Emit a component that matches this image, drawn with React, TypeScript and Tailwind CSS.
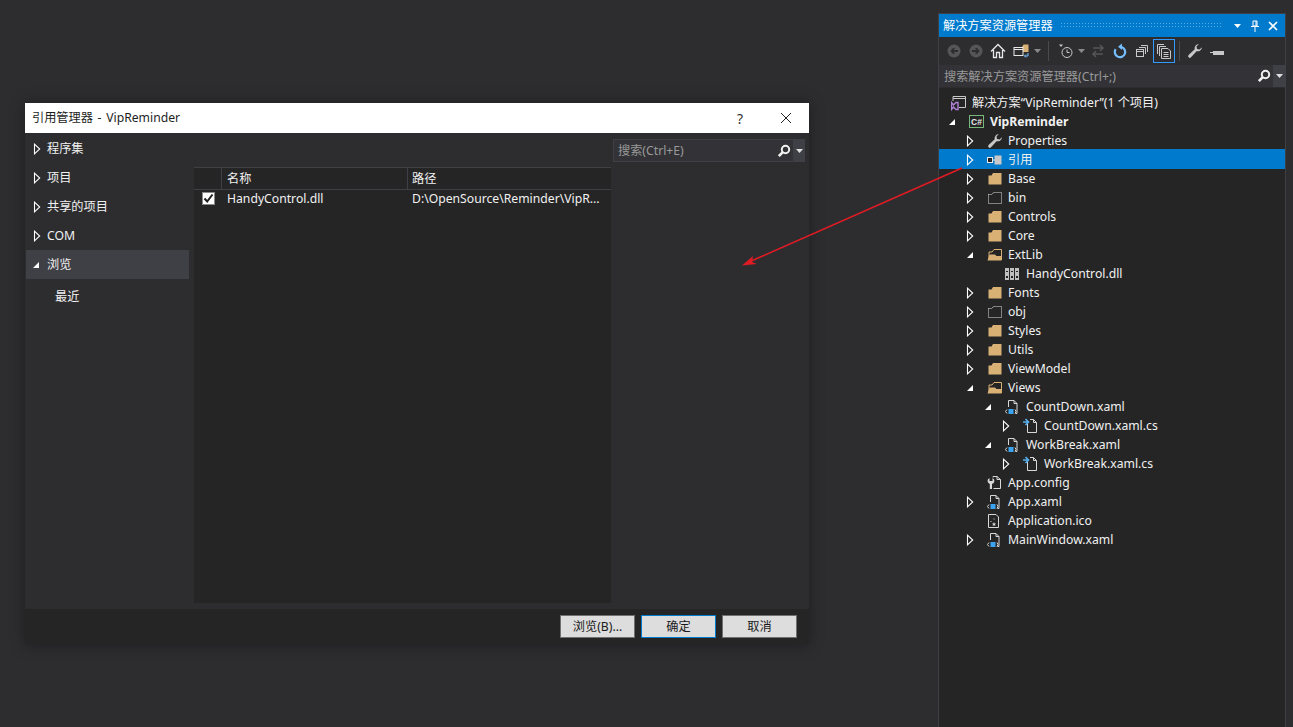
import React from "react";

const FONT = "font-['Noto_Sans','Noto_Sans_CJK_SC',sans-serif]";

function Closed() {
  return (
    <svg width="16" height="12" viewBox="0 0 16 12" className="shrink-0">
      <path d="M5.5 1.2 L10.7 6 L5.5 10.8 Z" fill="none" stroke="#ffffff" strokeWidth="1.1" />
    </svg>
  );
}
function Open() {
  return (
    <svg width="16" height="12" viewBox="0 0 16 12" className="shrink-0">
      <path d="M11 3 V9 H5 Z" fill="#ffffff" />
    </svg>
  );
}
function Folder() {
  return (
    <svg width="16" height="14" viewBox="0 0 16 14">
      <path d="M1.5 3.5 H4.5 L6 1 H14.5 V12.5 H1.5 Z" fill="#d9b174" />
    </svg>
  );
}
function FolderOpen() {
  return (
    <svg width="16" height="14" viewBox="0 0 16 14">
      <path d="M2 12 V4 H5 L7 1.5 H14.5 V12" fill="none" stroke="#d9b174" strokeWidth="1" />
      <path d="M0.5 12.5 L2.5 6.5 H8 L9.5 8 H14.5 V12.5 Z" fill="#d9b174" />
    </svg>
  );
}
function FolderDotted() {
  return (
    <svg width="16" height="14" viewBox="0 0 16 14">
      <path d="M1.5 3.5 H5 L6.5 1.5 H14.5 V12.5 H1.5 Z" fill="none" stroke="#e0e0e0" strokeDasharray="1 1" />
    </svg>
  );
}
function Wrench() {
  return (
    <svg width="16" height="16" viewBox="0 0 16 16">
      <path d="M15 4.2 A4.3 4.3 0 0 1 9.6 8.2 L4 14.3 A1.6 1.6 0 0 1 1.6 12 L7.7 6.3 A4.3 4.3 0 0 1 11.8 1 L9.5 3.4 L10 5.9 L12.5 6.4 Z" fill="#c8c8c8" />
    </svg>
  );
}
function RefIcon() {
  return (
    <svg width="16" height="14" viewBox="0 0 16 14">
      <rect x="0.5" y="4.5" width="5" height="5" fill="#252526" stroke="#e8e8e8" />
      <rect x="5" y="6.5" width="3" height="1" fill="#e8e8e8" />
      <rect x="7.5" y="2.5" width="7" height="9" fill="#c8c8c8" />
    </svg>
  );
}
function Dll() {
  return (
    <svg width="16" height="14" viewBox="0 0 16 14" fill="#c0c0c0">
      <rect x="0" y="1" width="4" height="12" />
      <rect x="5" y="1" width="4" height="12" />
      <rect x="10" y="1" width="4" height="12" />
      <path d="M1 4h2v1H1zM1 9h2v2H1zM6 4h2v1H6zM6 9h2v2H6zM11 4h2v1h-2zM11 9h2v2h-2z" fill="#252526" />
    </svg>
  );
}
function Xaml() {
  return (
    <svg width="16" height="16" viewBox="0 0 16 16">
      <path d="M3.5 8 V1.5 H9 L12 4.5 V14.5 H10.5" fill="none" stroke="#d8d8d8" />
      <path d="M9 1.5 V4.5 H12" fill="none" stroke="#d8d8d8" />
      <rect x="3.5" y="10" width="5" height="5" fill="#3ba4f0" />
      <path d="M2 10.5 L0.5 12.5 L2 14.5 M10 10.5 L11 12.5 L10 14.5" fill="none" stroke="#d8d8d8" />
    </svg>
  );
}
function Cs() {
  return (
    <svg width="16" height="16" viewBox="0 0 16 16">
      <path d="M4.5 6 V14.5 H13.5 V4.5 L10.5 1.5 H7 M10.5 1.5 V4.5 H13.5" fill="none" stroke="#d8d8d8" />
      <path d="M0 4 H5 M2.5 1 L5.5 4 L2.5 7" fill="none" stroke="#58b0f0" strokeWidth="1.6" />
    </svg>
  );
}
function Config() {
  return (
    <svg width="16" height="16" viewBox="0 0 16 16">
      <path d="M6 2.5 V1.5 H10 L13.5 4.5 V13.5 H6.5 M10 1.5 V4.5 H13.5" fill="none" stroke="#d8d8d8" />
      <path d="M5.5 3 V6 H2.5 V3 A3.2 3.2 0 0 0 2.8 9 V14 H5 V9 A3.2 3.2 0 0 0 5.5 3 Z" fill="#d8d8d8" />
    </svg>
  );
}
function Ico() {
  return (
    <svg width="16" height="16" viewBox="0 0 16 16">
      <path d="M1.5 1.5 H9 L11.5 4 V14.5 H1.5 Z" fill="none" stroke="#d8d8d8" />
      <path d="M6.5 5.5 h1v1h-1zM3.5 8h1v1h-1zM7 9 L7.6 10.5 L9 10.5 L8 11.5 L8.4 13 L7 12.2 L5.6 13 L6 11.5 L5 10.5 L6.4 10.5 Z" fill="#d8d8d8" />
    </svg>
  );
}
function Solution() {
  return (
    <svg width="16" height="16" viewBox="0 0 16 16">
      <path d="M2 6 V1.5 H14.5 V12.5 H8" fill="none" stroke="#c8c8c8" />
      <path d="M2 3.5 H14.5" stroke="#c8c8c8" />
      <path d="M0.5 7.5 L2.5 10 L5 7.5 H7 V14.5 H5 L2.5 12 L0.5 14.5 Z" fill="none" stroke="#b180d7" strokeWidth="1.4" />
    </svg>
  );
}
function CsProj() {
  return (
    <svg width="16" height="14" viewBox="0 0 16 14">
      <rect x="0.5" y="0.5" width="14" height="12" fill="#252526" stroke="#76b77a" />
      <text x="7.5" y="10" textAnchor="middle" fontSize="8.5" fontWeight="700" fill="#e8e8e8" fontFamily="Liberation Sans">C#</text>
    </svg>
  );
}
function Magnifier() {
  return (
    <svg width="14" height="14" viewBox="0 0 14 14">
      <circle cx="8.5" cy="5.5" r="3.7" fill="none" stroke="#f1f1f1" strokeWidth="2" />
      <path d="M5.8 8.2 L1.8 12.2" stroke="#f1f1f1" strokeWidth="2.6" />
    </svg>
  );
}
function Caret({ color = "#e0e0e0" }: { color?: string }) {
  return (
    <svg width="7" height="4" viewBox="0 0 7 4">
      <path d="M0 0 H7 L3.5 4 Z" fill={color} />
    </svg>
  );
}

type Node = { level: number; arrow?: "c" | "o"; icon: React.ReactNode; label: string; bold?: boolean; sel?: boolean };
const pad: Record<number, string> = {
  0: "pl-[3px]",
  1: "pl-[5px]",
  2: "pl-[23px]",
  3: "pl-[41px]",
  4: "pl-[59px]",
};
const tree: Node[] = [
  { level: 0, icon: <Solution />, label: "解决方案“VipReminder”(1 个项目)" },
  { level: 1, arrow: "o", icon: <CsProj />, label: "VipReminder", bold: true },
  { level: 2, arrow: "c", icon: <Wrench />, label: "Properties" },
  { level: 2, arrow: "c", icon: <RefIcon />, label: "引用", sel: true },
  { level: 2, arrow: "c", icon: <Folder />, label: "Base" },
  { level: 2, arrow: "c", icon: <FolderDotted />, label: "bin" },
  { level: 2, arrow: "c", icon: <Folder />, label: "Controls" },
  { level: 2, arrow: "c", icon: <Folder />, label: "Core" },
  { level: 2, arrow: "o", icon: <FolderOpen />, label: "ExtLib" },
  { level: 3, icon: <Dll />, label: "HandyControl.dll" },
  { level: 2, arrow: "c", icon: <Folder />, label: "Fonts" },
  { level: 2, arrow: "c", icon: <FolderDotted />, label: "obj" },
  { level: 2, arrow: "c", icon: <Folder />, label: "Styles" },
  { level: 2, arrow: "c", icon: <Folder />, label: "Utils" },
  { level: 2, arrow: "c", icon: <Folder />, label: "ViewModel" },
  { level: 2, arrow: "o", icon: <FolderOpen />, label: "Views" },
  { level: 3, arrow: "o", icon: <Xaml />, label: "CountDown.xaml" },
  { level: 4, arrow: "c", icon: <Cs />, label: "CountDown.xaml.cs" },
  { level: 3, arrow: "o", icon: <Xaml />, label: "WorkBreak.xaml" },
  { level: 4, arrow: "c", icon: <Cs />, label: "WorkBreak.xaml.cs" },
  { level: 2, icon: <Config />, label: "App.config" },
  { level: 2, arrow: "c", icon: <Xaml />, label: "App.xaml" },
  { level: 2, icon: <Ico />, label: "Application.ico" },
  { level: 2, arrow: "c", icon: <Xaml />, label: "MainWindow.xaml" },
];

function TreeRow({ n }: { n: Node }) {
  return (
    <div className={`flex items-center text-[12.2px] text-[#f1f1f1] ${pad[n.level]} ${n.sel ? "-mt-px h-[20px] bg-[#007acc] pt-px" : "h-[19px]"} ${n.bold ? "font-bold" : ""}`}>
      {n.level > 0 && <span className="flex w-4 justify-center">{n.arrow === "c" ? <Closed /> : n.arrow === "o" ? <Open /> : null}</span>}
      <span className="ml-[9px] flex w-4 shrink-0 justify-center">{n.icon}</span>
      <span className="ml-[5px] whitespace-nowrap leading-[19px]">{n.label}</span>
    </div>
  );
}

function Toolbar() {
  return (
    <div className="flex h-[28px] items-center pl-[4px] text-[#c8c8c8]">
      <span className="flex w-[22px] justify-center">
        <svg width="16" height="16" viewBox="0 0 16 16"><circle cx="8" cy="8" r="6.5" fill="#555558" /><path d="M12 7v2H7.5l1.5 2H7L4.5 8 7 5h2L7.5 7z" fill="#2d2d30" /></svg>
      </span>
      <span className="flex w-[22px] justify-center">
        <svg width="16" height="16" viewBox="0 0 16 16"><circle cx="8" cy="8" r="6.5" fill="#555558" /><path d="M4 7v2h4.5L7 11h2l2.5-3L9 5H7l1.5 2z" fill="#2d2d30" /></svg>
      </span>
      <span className="flex w-[22px] justify-center">
        <svg width="16" height="16" viewBox="0 0 16 16"><path d="M1 8.5 L8 1.5 L15 8.5 M3.5 7 V14.5 H6.5 V9.5 H9.5 V14.5 H12.5 V7" fill="none" stroke="#e8e8e8" strokeWidth="1.3" /></svg>
      </span>
      <span className="flex w-[24px] justify-center">
        <svg width="16" height="16" viewBox="0 0 16 16">
          <path d="M7 4 H9 L10.5 1.5 H15.5 V9 H7 Z" fill="#d9b174" />
          <rect x="1" y="4.5" width="9" height="8" fill="#2d2d30" stroke="#e8e8e8" />
          <path d="M1 6.5 H10" stroke="#e8e8e8" />
          <path d="M15 10 V13 H11.5 M13 11.5 L11.5 13 L13 14.5" fill="none" stroke="#75beff" />
        </svg>
      </span>
      <span className="flex w-[9px] justify-center"><Caret color="#8a8a8a" /></span>
      <span className="ml-[6px] h-[20px] w-px bg-[#4a4a4e]" />
      <span className="ml-[6px] flex w-[22px] justify-center">
        <svg width="16" height="16" viewBox="0 0 16 16">
          <path d="M1 1.5 H5 L3 4 Z" fill="#c8c8c8" />
          <circle cx="9" cy="9.5" r="5" fill="none" stroke="#c8c8c8" />
          <path d="M9 6.5 V9.5 H11.5" fill="none" stroke="#c8c8c8" />
        </svg>
      </span>
      <span className="flex w-[9px] justify-center"><Caret color="#8a8a8a" /></span>
      <span className="ml-[1px] flex w-[22px] justify-center">
        <svg width="16" height="16" viewBox="0 0 16 16" fill="none" stroke="#555558" strokeWidth="1.6">
          <path d="M3 5 H13 M10 2 L13 5 L10 8 M13 11 H3 M6 8 L3 11 L6 14" />
        </svg>
      </span>
      <span className="flex w-[22px] justify-center">
        <svg width="16" height="16" viewBox="0 0 16 16" fill="none">
          <path d="M9.5 4 A5.2 5.2 0 1 1 3.6 6.2" stroke="#75beff" strokeWidth="2.2" />
          <path d="M10 0.5 V7 L6 3.7 Z" fill="#75beff" />
        </svg>
      </span>
      <span className="flex w-[22px] justify-center">
        <svg width="16" height="16" viewBox="0 0 16 16" fill="none" stroke="#c8c8c8">
          <rect x="2.5" y="6.5" width="7" height="7" />
          <path d="M2.5 8.5 H9.5 M5 4.5 H11.5 V11 M7 2.5 H13.5 V9" />
        </svg>
      </span>
      <span className="flex h-[24px] w-[22px] items-center justify-center border border-[#3399ff]">
        <svg width="16" height="18" viewBox="0 0 16 18" fill="none" stroke="#c8c8c8">
          <path d="M1.5 12 V2.5 H8 M3.5 14 V4.5 H10" />
          <path d="M5.5 16.5 V6.5 H12 L14.5 9 V16.5 Z M7.5 10.5 H12.5 M7.5 12.5 H12.5 M7.5 14.5 H12.5" />
        </svg>
      </span>
      <span className="ml-[4px] h-[20px] w-px bg-[#4a4a4e]" />
      <span className="ml-[4px] flex w-[22px] justify-center"><Wrench /></span>
      <span className="flex w-[22px] justify-center">
        <svg width="16" height="16" viewBox="0 0 16 16"><path d="M1 9 H4 V8 H15 V12 H4 V10 H1 Z" fill="#c8c8c8" /></svg>
      </span>
    </div>
  );
}

function Panel() {
  return (
    <aside className="ml-[129px] mt-[13px] flex h-[714px] w-[348px] shrink-0 flex-col border-x border-t border-[#3f3f46] bg-[#252526]">
      <div className="flex h-[23px] shrink-0 items-center bg-[#007acc] pl-[4px] pr-[5px] text-[12.2px] text-white">
        <span className="whitespace-nowrap pt-[2px]">解决方案资源管理器</span>
        <span className="ml-[7px] h-[7px] flex-1 bg-[radial-gradient(#58aee0_0.8px,transparent_0.9px)] bg-[length:3px_3px]" />
        <span className="ml-[8px] flex w-[12px] justify-center"><Caret color="#fff" /></span>
        <span className="ml-[6px] flex w-[12px] justify-center">
          <svg width="10" height="12" viewBox="0 0 10 12" fill="none" stroke="#fff"><path d="M3 1h4v5H3zM1 6.5h8M5 7v5M6 1v5" /></svg>
        </span>
        <span className="ml-[5px] flex w-[14px] justify-center">
          <svg width="10" height="10" viewBox="0 0 10 10" stroke="#fff" strokeWidth="1.6"><path d="M1 1 L9 9 M9 1 L1 9" /></svg>
        </span>
      </div>
      <div className="bg-[#2d2d30]"><Toolbar /></div>
      <div className="flex h-[23px] shrink-0 items-center border-b border-[#2d2d30] bg-[#333337] pl-[5px] text-[12.2px] text-[#999999]">
        <span className="flex-1 whitespace-nowrap pt-[2px]">搜索解决方案资源管理器(Ctrl+;)</span>
        <span className="mr-[2px] flex w-[14px] justify-center"><Magnifier /></span>
        <span className="flex h-full w-[12px] items-center justify-center bg-[#3f3f46]"><Caret /></span>
      </div>
      <div className="pt-[5px]">
        {tree.map((n) => <TreeRow key={n.label} n={n} />)}
      </div>
    </aside>
  );
}

function NavItem({ label, open }: { label: string; open?: boolean }) {
  return (
    <div className={`flex h-[29px] items-center pl-[1px] text-[12.2px] text-[#f1f1f1] ${open ? "w-[163px] bg-[#3f3f46]" : ""}`}>
      <span className={`flex w-4 justify-center ${open ? "ml-[1px]" : "ml-[2px]"}`}>{open ? <Open /> : <Closed />}</span>
      <span className={`whitespace-nowrap pt-[2px] ${open ? "ml-[3px]" : "ml-[2px]"}`}>{label}</span>
    </div>
  );
}

function Btn({ label, active }: { label: string; active?: boolean }) {
  return (
    <button className={`h-[23px] w-[75px] border bg-[#dddddd] text-[12.2px] leading-[21px] text-[#1a1a1a] ${active ? "border-[#007acc]" : "border-[#707070]"}`}>
      {label}
    </button>
  );
}

function Dialog() {
  return (
    <section className="flex h-[542px] w-[784px] shrink-0 flex-col bg-[#2d2d30] shadow-[0_0_14px_rgba(0,0,0,0.35)]">
      <header className="flex h-[30px] shrink-0 items-center bg-white pl-[7px] text-[12.2px] text-[#1e1e1e]">
        <span className="flex-1 whitespace-nowrap [word-spacing:1.5px]">引用管理器 - VipReminder</span>
        <span className="w-[8px] text-[14px] text-[#333333]">?</span>
        <span className="ml-[35px] mr-[17px] flex w-[12px] justify-center">
          <svg width="12" height="12" viewBox="0 0 12 12" stroke="#222" strokeWidth="1"><path d="M1 1 L11 11 M11 1 L1 11" /></svg>
        </span>
      </header>
      <div className="flex min-h-0 flex-1">
        <nav className="w-[169px] shrink-0 pl-[1px] pt-[1px]">
          <NavItem label="程序集" />
          <NavItem label="项目" />
          <NavItem label="共享的项目" />
          <NavItem label="COM" />
          <NavItem label="浏览" open />
          <div className="h-[36px] pl-[29px] text-[12.2px] leading-[36px] text-[#f1f1f1]">最近</div>
        </nav>
        <div className="flex w-[417px] shrink-0 flex-col pt-[34px] pb-[6px]">
          <div className="flex-1 bg-[#252526] text-[12.2px] text-[#f1f1f1]">
            <div className="flex h-[23px] border-y border-[#3f3f46]">
              <span className="w-[28px] border-r border-[#3f3f46]" />
              <span className="w-[186px] border-r border-[#3f3f46] pl-[5px] leading-[21px]">名称</span>
              <span className="pl-[4px] leading-[21px]">路径</span>
            </div>
            <div className="flex h-[18px] items-center">
              <span className="mb-[2px] flex w-[28px] justify-center">
                <span className="flex h-[13px] w-[13px] items-center justify-center border border-[#8a8a8a] bg-white">
                  <svg width="11" height="11" viewBox="0 0 11 11" fill="none" stroke="#1e1e1e" strokeWidth="2"><path d="M1.5 5.5 L4.2 8.5 L9.5 1.5" /></svg>
                </span>
              </span>
              <span className="w-[186px] pl-[5px]">HandyControl.dll</span>
              <span className="whitespace-nowrap pl-[4px]">D:\OpenSource\Reminder\VipR...</span>
            </div>
          </div>
        </div>
        <div className="ml-[2px] pt-[6px]">
          <div className="flex h-[23px] w-[192px] items-center border border-[#3f3f46] border-r-0 bg-[#333337] pl-[4px] text-[12.2px] text-[#999999]">
            <span className="flex-1 pt-[2px]">搜索(Ctrl+E)</span>
            <span className="mr-[2px] flex w-[14px] justify-center"><Magnifier /></span>
            <span className="flex h-full w-[12px] items-center justify-center bg-[#3f3f46]"><Caret /></span>
          </div>
        </div>
      </div>
      <footer className="flex h-[36px] shrink-0 items-start justify-end gap-[6px] bg-[#252526] pr-[12px] pt-[6px]">
        <Btn label="浏览(B)..." />
        <Btn label="确定" active />
        <Btn label="取消" />
      </footer>
    </section>
  );
}

export default function App() {
  return (
    <div className={`relative flex h-[727px] w-[1293px] overflow-hidden bg-[#2d2d30] pl-[25px] pt-0 ${FONT}`}>
      <div className="pt-[103px]"><Dialog /></div>
      <Panel />
      <svg className="pointer-events-none absolute left-0 top-0" width="1293" height="727" viewBox="0 0 1293 727">
        <path d="M962 168 L749 262" stroke="#e01b24" strokeWidth="1.6" fill="none" />
        <path d="M742 265.5 L753 256 L752 262 L757 264 Z" fill="#e01b24" />
      </svg>
    </div>
  );
}
